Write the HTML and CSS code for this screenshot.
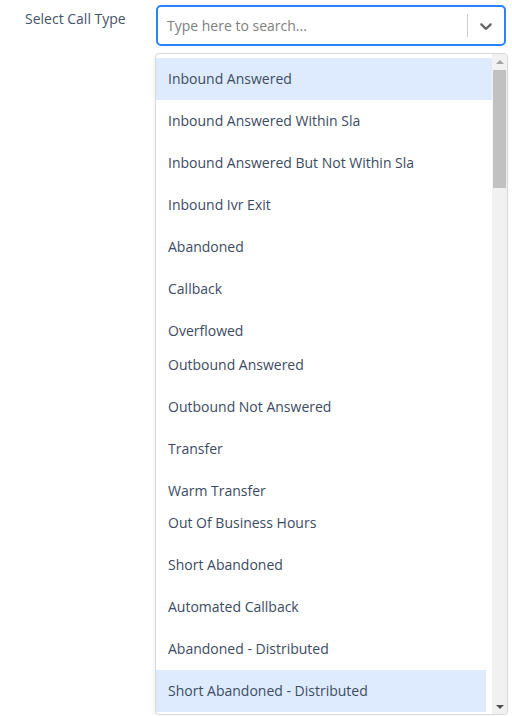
FILE: index.html
```html
<!DOCTYPE html>
<html lang="en">
<head>
<meta charset="utf-8">
<title>Select Call Type</title>
<link rel="stylesheet" href="styles.css">
</head>
<body>
<div class="field">
  <label class="field-label">Select Call Type</label>
  <div class="select">
    <div class="control">
      <div class="value">
        <span class="placeholder">Type here to search...</span>
      </div>
      <div class="indicators">
        <span class="separator"></span>
        <span class="indicator">
          <svg viewBox="0 0 20 20" width="20" height="20" aria-hidden="true"><path d="M4.516 7.548c0.436-0.446 1.043-0.481 1.576 0l3.908 3.747 3.908-3.747c0.533-0.481 1.141-0.446 1.574 0 0.436 0.445 0.408 1.197 0 1.615-0.406 0.418-4.695 4.502-4.695 4.502-0.217 0.223-0.502 0.335-0.787 0.335s-0.57-0.112-0.789-0.335c0 0-4.287-4.084-4.695-4.502s-0.436-1.17 0-1.615z"/></svg>
        </span>
      </div>
    </div>
    <div class="menu">
      <ul class="options">
        <li class="option focused">Inbound Answered</li>
        <li class="option">Inbound Answered Within Sla</li>
        <li class="option">Inbound Answered But Not Within Sla</li>
        <li class="option">Inbound Ivr Exit</li>
        <li class="option">Abandoned</li>
        <li class="option">Callback</li>
        <li class="option short-a">Overflowed</li>
        <li class="option">Outbound Answered</li>
        <li class="option">Outbound Not Answered</li>
        <li class="option">Transfer</li>
        <li class="option short-b">Warm Transfer</li>
        <li class="option">Out Of Business Hours</li>
        <li class="option">Short Abandoned</li>
        <li class="option">Automated Callback</li>
        <li class="option">Abandoned - Distributed</li>
        <li class="option focused narrow">Short Abandoned - Distributed</li>
      </ul>
      <div class="scrollbar">
        <div class="sb-btn"><span class="arrow-up"></span></div>
        <div class="sb-thumb"></div>
        <div class="sb-rest"></div>
        <div class="sb-btn"><span class="arrow-down"></span></div>
      </div>
    </div>
  </div>
</div>
</body>
</html>
```

FILE: styles.css
```css
html, body {
  margin: 0;
  padding: 0;
  background: #ffffff;
}

body {
  font-family: "Open Sans", "Noto Sans", "Liberation Sans", sans-serif;
  font-size: 14px;
  color: #3c4b5f;
  overflow: hidden;
}

.field {
  display: flex;
  align-items: flex-start;
  padding-top: 5px;
}

.field-label {
  box-sizing: border-box;
  width: 156px;
  padding-left: 25px;
  margin-top: 4px;
  line-height: 20px;
  color: #44546a;
}

.select {
  width: 350px;
}

.control {
  box-sizing: border-box;
  height: 41px;
  display: flex;
  align-items: center;
  border: 2px solid #2684ff;
  border-radius: 5px;
  background: #fff;
}

.value {
  flex: 1;
  padding-left: 9px;
  line-height: 20px;
}

.placeholder {
  color: #808080;
}

.indicators {
  display: flex;
  align-items: center;
  align-self: stretch;
}

.separator {
  width: 1px;
  height: 23px;
  background: #cccccc;
}

.indicator {
  display: flex;
  padding: 0 8px;
  color: #666666;
}

.indicator svg {
  fill: currentColor;
}

.menu {
  box-sizing: border-box;
  display: flex;
  width: 353px;
  height: 662px;
  margin: 7px 0 0 -1px;
  border: 1px solid #d8d8d8;
  border-radius: 4px;
  box-shadow: -1px 2px 4px rgba(0, 0, 0, 0.06);
  background: #fff;
  overflow: hidden;
}

.options {
  flex: 1;
  list-style: none;
  margin: 0;
  padding: 4px 0 0;
}

.option {
  box-sizing: border-box;
  height: 42px;
  padding-left: 12px;
  line-height: 42px;
  white-space: nowrap;
  color: #3c4b5f;
}

.option.short-a {
  height: 34px;
}

.option.short-b {
  height: 32px;
}

.option.focused {
  background: #deebff;
}

.option.narrow {
  margin-right: 6px;
}

.scrollbar {
  width: 15px;
  display: flex;
  flex-direction: column;
  background: #f1f1f1;
}

.sb-btn {
  height: 15px;
  display: flex;
  align-items: center;
  justify-content: center;
}

.arrow-up {
  width: 0;
  height: 0;
  border-left: 4px solid transparent;
  border-right: 4px solid transparent;
  border-bottom: 4px solid #a3a3a3;
}

.arrow-down {
  width: 0;
  height: 0;
  border-left: 4px solid transparent;
  border-right: 4px solid transparent;
  border-top: 4px solid #505050;
}

.sb-thumb {
  height: 118px;
  margin: 1px 1px 0;
  background: #c1c1c1;
}

.sb-rest {
  flex: 1;
}
```
